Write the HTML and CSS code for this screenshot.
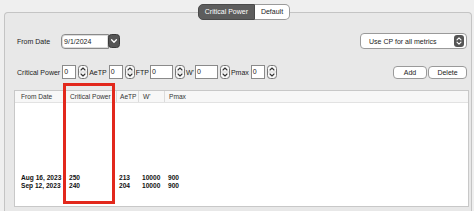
FILE: index.html
```html
<!DOCTYPE html>
<html lang="en">
<head>
    <meta charset="UTF-8">
    <meta name="viewport" content="width=device-width, initial-scale=1.0">
    <title>Critical Power</title>
    <link rel="stylesheet" href="styles.css">
</head>
<body>
    <div class="panel">
        <div class="tabs">
            <span class="tab active">Critical Power</span>
            <span class="tab">Default</span>
        </div>

        <div class="row date-row">
            <span class="label">From Date</span>
            <div class="date-field">
                <span class="date-text">9/1/2024</span>
                <span class="date-btn">
                    <svg viewBox="0 0 12 14" width="12" height="14">
                        <rect x="0.5" y="0.5" width="11" height="13" rx="3" fill="#555" stroke="#3a3a3a"/>
                        <path d="M3.6,5.8 L6,8.2 L8.4,5.8" stroke="#fff" stroke-width="1.3" fill="none" stroke-linecap="round" stroke-linejoin="round"/>
                    </svg>
                </span>
            </div>
            <div class="popup">
                <span class="popup-text">Use CP for all metrics</span>
                <svg viewBox="0 0 10 12" width="10" height="12">
                    <rect x="0" y="0" width="10" height="12" rx="3" fill="#555"/>
                    <path d="M3,4.8 L5,2.8 L7,4.8 M3,7.2 L5,9.2 L7,7.2" stroke="#fff" stroke-width="1.1" fill="none" stroke-linecap="round" stroke-linejoin="round"/>
                </svg>
            </div>
        </div>

        <div class="row params-row">
            <span class="label">Critical Power</span>
            <span class="num">0</span>
            <span class="stepper"><svg viewBox="0 0 10 14" width="10" height="14"><rect x="0.5" y="0.5" width="9" height="13" rx="3" fill="#fafafa" stroke="#777"/><path d="M3,5 L5,3 L7,5 M3,9 L5,11 L7,9" stroke="#333" stroke-width="1.1" fill="none" stroke-linecap="round" stroke-linejoin="round"/><path d="M1,7 L9,7" stroke="#bbb" stroke-width="0.6"/></svg></span>
            <span class="label small">AeTP</span>
            <span class="num">0</span>
            <span class="stepper"><svg viewBox="0 0 10 14" width="10" height="14"><rect x="0.5" y="0.5" width="9" height="13" rx="3" fill="#fafafa" stroke="#777"/><path d="M3,5 L5,3 L7,5 M3,9 L5,11 L7,9" stroke="#333" stroke-width="1.1" fill="none" stroke-linecap="round" stroke-linejoin="round"/><path d="M1,7 L9,7" stroke="#bbb" stroke-width="0.6"/></svg></span>
            <span class="label small">FTP</span>
            <span class="num wide">0</span>
            <span class="stepper"><svg viewBox="0 0 10 14" width="10" height="14"><rect x="0.5" y="0.5" width="9" height="13" rx="3" fill="#fafafa" stroke="#777"/><path d="M3,5 L5,3 L7,5 M3,9 L5,11 L7,9" stroke="#333" stroke-width="1.1" fill="none" stroke-linecap="round" stroke-linejoin="round"/><path d="M1,7 L9,7" stroke="#bbb" stroke-width="0.6"/></svg></span>
            <span class="label small">W'</span>
            <span class="num wide">0</span>
            <span class="stepper"><svg viewBox="0 0 10 14" width="10" height="14"><rect x="0.5" y="0.5" width="9" height="13" rx="3" fill="#fafafa" stroke="#777"/><path d="M3,5 L5,3 L7,5 M3,9 L5,11 L7,9" stroke="#333" stroke-width="1.1" fill="none" stroke-linecap="round" stroke-linejoin="round"/><path d="M1,7 L9,7" stroke="#bbb" stroke-width="0.6"/></svg></span>
            <span class="label small">Pmax</span>
            <span class="num">0</span>
            <span class="stepper"><svg viewBox="0 0 10 14" width="10" height="14"><rect x="0.5" y="0.5" width="9" height="13" rx="3" fill="#fafafa" stroke="#777"/><path d="M3,5 L5,3 L7,5 M3,9 L5,11 L7,9" stroke="#333" stroke-width="1.1" fill="none" stroke-linecap="round" stroke-linejoin="round"/><path d="M1,7 L9,7" stroke="#bbb" stroke-width="0.6"/></svg></span>

            <div class="actions">
                <button class="btn add">Add</button>
                <button class="btn delete">Delete</button>
            </div>
        </div>

        <div class="table">
            <div class="thead">
                <span class="cell">From Date</span>
                <span class="cell">Critical Power</span>
                <span class="cell">AeTP</span>
                <span class="cell">W'</span>
                <span class="cell">Pmax</span>
            </div>
            <div class="tbody">
                <div class="tr">
                    <span class="cell">Aug 16, 2023</span>
                    <span class="cell">250</span>
                    <span class="cell">213</span>
                    <span class="cell">10000</span>
                    <span class="cell">900</span>
                </div>
                <div class="tr">
                    <span class="cell">Sep 12, 2023</span>
                    <span class="cell">240</span>
                    <span class="cell">204</span>
                    <span class="cell">10000</span>
                    <span class="cell">900</span>
                </div>
            </div>
            <div class="highlight"></div>
        </div>
    </div>
</body>
</html>
```

FILE: styles.css
```css
/* Base */
* {
    margin: 0;
    padding: 0;
    box-sizing: border-box;
}

body {
    font-family: "Liberation Sans", Arial, sans-serif;
    font-size: 7px;
    color: #222;
    background-color: #efefef;
    height: 211px;
    overflow: hidden;
}

/* Group box */
.panel {
    margin: 12px 2px 0 4px;
    height: 199px;
    background-color: #e8e8e8;
    border: 1px solid #c4c4c4;
    border-bottom: none;
    border-radius: 4px 4px 0 0;
}

/* Segmented tabs */
.tabs {
    display: flex;
    justify-content: center;
    margin-top: -9px;
    padding-left: 12px;
}

.tab {
    height: 16px;
    line-height: 14px;
    padding: 0 6px;
    white-space: nowrap;
    background-color: #fff;
    border: 1px solid #9a9a9a;
    border-left: none;
    border-radius: 0 5px 5px 0;
}

.tab.active {
    width: 57px;
    padding: 0;
    text-align: center;
    background-color: #5d5d5d;
    border: 1px solid #4a4a4a;
    border-radius: 5px 0 0 5px;
    color: #fff;
}

/* Rows */
.row {
    display: flex;
    align-items: center;
    padding-left: 12px;
    padding-right: 4px;
}

.date-row {
    margin-top: 13px;
    height: 16px;
}

.label {
    white-space: nowrap;
}

.date-field {
    display: flex;
    align-items: center;
    margin-left: 11px;
}

.date-text {
    width: 48px;
    height: 15px;
    line-height: 13px;
    padding-left: 2px;
    background-color: #fff;
    border: 1px solid #8a8a8a;
    border-radius: 4px 0 0 4px;
    box-shadow: inset 0 0 0 1px #dcdcdc;
}

.date-btn {
    display: flex;
    margin-left: -1px;
}

.popup {
    display: flex;
    align-items: center;
    justify-content: space-between;
    margin-left: auto;
    width: 107px;
    height: 16px;
    padding: 0 2px 0 8px;
    background-color: #fff;
    border: 1px solid #9a9a9a;
    border-radius: 4px;
}

.params-row {
    margin-top: 16px;
    height: 14px;
}

.num {
    width: 14px;
    height: 14px;
    line-height: 12px;
    padding-left: 1px;
    margin-left: 2px;
    background-color: #fff;
    border: 1px solid #8a8a8a;
}

.num.wide {
    width: 23px;
    margin-left: 1px;
}

.stepper {
    display: flex;
    margin-left: 2px;
}

.label.small {
    margin-left: 1px;
}

.actions {
    display: flex;
    gap: 1px;
    margin-left: auto;
    margin-top: 1px;
}

.btn {
    font-family: inherit;
    font-size: 7px;
    color: #222;
    height: 13px;
    background-color: #fff;
    border: 1px solid #9a9a9a;
    border-radius: 4px;
}

.btn.add {
    width: 34px;
}

.btn.delete {
    width: 39px;
}

/* Table */
.table {
    position: relative;
    margin: 11px 2px 0 9px;
    height: 117px;
    font-size: 6.6px;
    background-color: #fff;
    border: 1px solid #c8c8c8;
}

.thead,
.tr {
    display: grid;
    grid-template-columns: 49px 52px 22px 26px 1fr;
}

.thead {
    height: 12px;
    line-height: 11px;
    color: #333;
    background-color: #f7f7f7;
    border-bottom: 1px solid #e2e2e2;
}

.thead .cell + .cell {
    border-left: 1px solid #dcdcdc;
}

.cell {
    padding-left: 4px;
    white-space: nowrap;
    overflow: hidden;
}

.cell:first-child {
    padding-left: 6px;
}

.cell:nth-child(2) {
    padding-left: 5px;
}

.cell:nth-child(3) {
    padding-left: 3px;
}

.tbody {
    padding-top: 71px;
}

.tr {
    height: 8px;
    line-height: 8px;
    font-weight: bold;
    color: #111;
}

/* Annotation box over the Critical Power column */
.highlight {
    position: absolute;
    left: 48px;
    top: -8px;
    width: 52px;
    height: 121px;
    border: 3px solid #e2281c;
}
```
